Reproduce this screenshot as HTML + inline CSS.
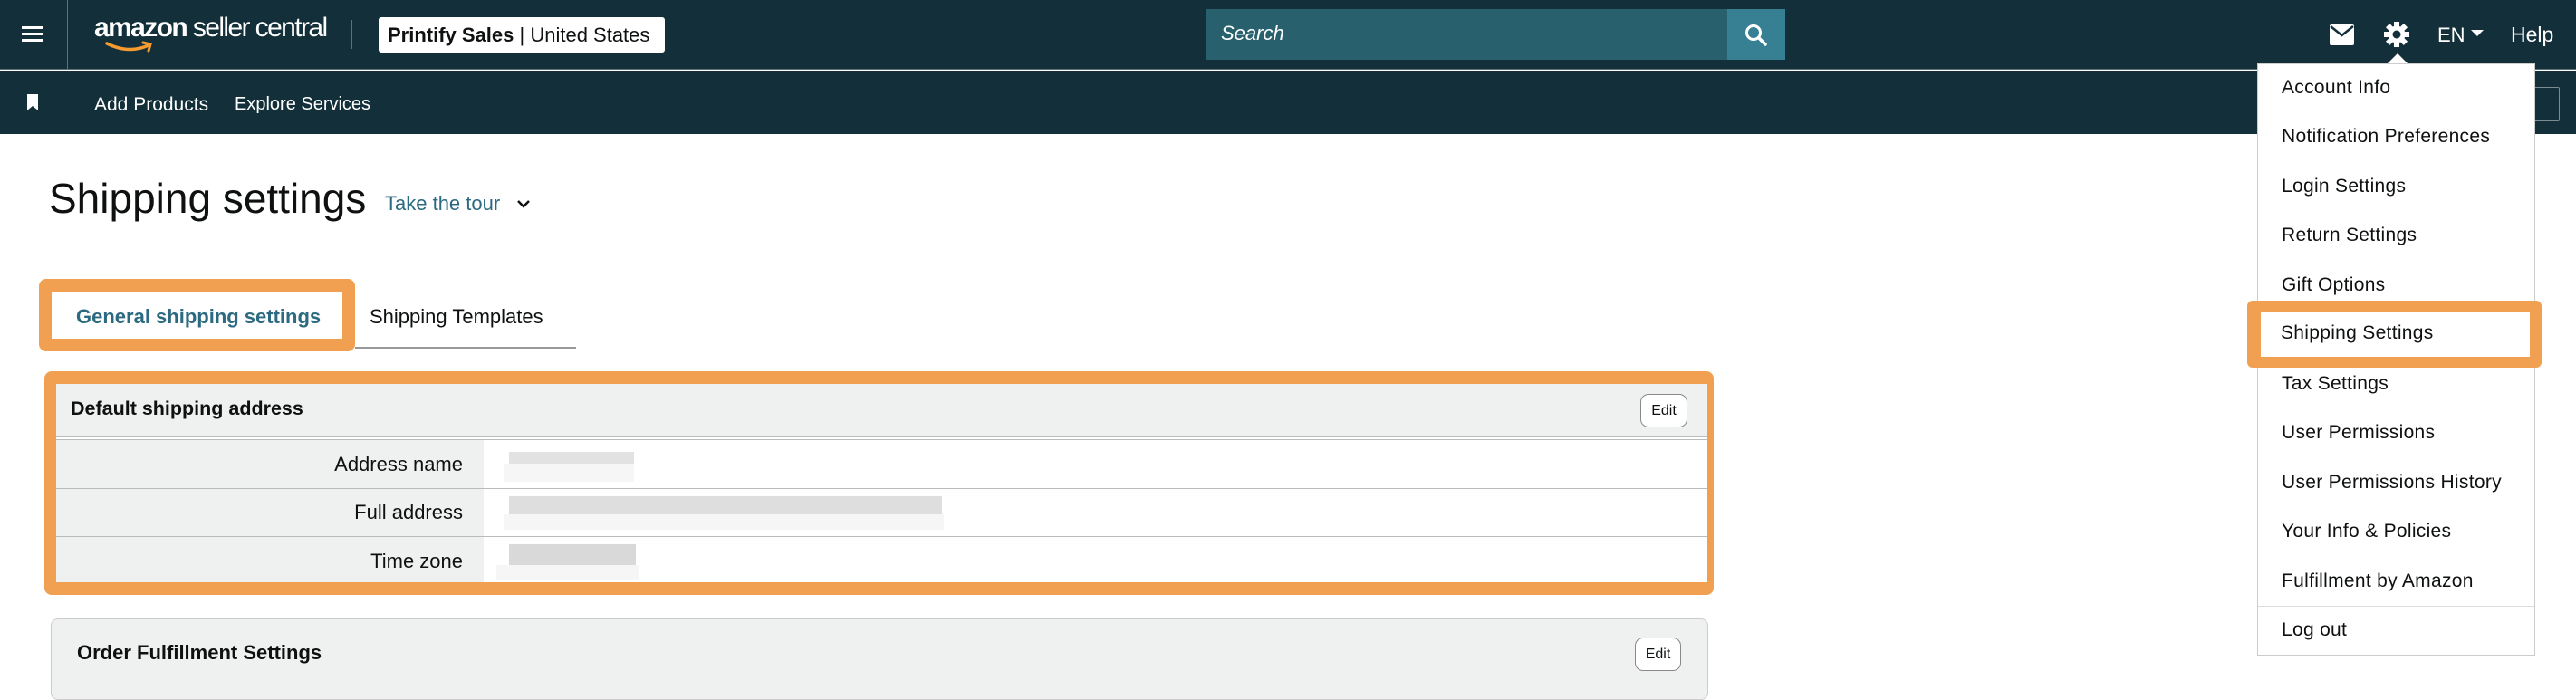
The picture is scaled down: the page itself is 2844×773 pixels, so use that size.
<!DOCTYPE html>
<html><head><meta charset="utf-8"><style>
*{box-sizing:border-box;margin:0;padding:0}
body{width:2844px;height:762px;overflow:hidden;background:#fff;font-family:"Liberation Sans",sans-serif;position:relative;color:#0f1111}
.a{position:absolute}
.nav1{left:0;top:0;width:2844px;height:77px;background:#132f3a;border-bottom:1px solid #5d7278}
.nav2{left:0;top:78px;width:2844px;height:70px;background:#132f3a}
.w{color:#fff}
.menu div{font-size:21px;color:#0f1111;position:absolute;left:26px;line-height:24px;letter-spacing:0.3px}
</style></head><body>
<div class="a nav1"></div>
<div class="a nav2"></div>
<div class="a" style="left:24px;top:29px;width:24px;height:3px;background:#fff"></div>
<div class="a" style="left:24px;top:36px;width:24px;height:3px;background:#fff"></div>
<div class="a" style="left:24px;top:43px;width:24px;height:3px;background:#fff"></div>
<div class="a" style="left:74px;top:0;width:1px;height:77px;background:#5d7278"></div>
<div class="a w" style="left:104px;top:14px;font-size:30px;letter-spacing:-1.6px;white-space:nowrap"><b style="font-weight:bold">amazon</b> seller central</div>
<svg class="a" style="left:116px;top:44px" width="56" height="16"><path d="M2 4 Q26 16 48 6" stroke="#f59b2f" stroke-width="3.5" fill="none" stroke-linecap="round"/><path d="M42 3 L50 5 L48 12" stroke="#f59b2f" stroke-width="3" fill="none" stroke-linecap="round"/></svg>
<div class="a" style="left:388px;top:22px;width:1px;height:32px;background:#5d7278"></div>
<div class="a" style="left:418px;top:19px;width:316px;height:39px;background:#fff;border-radius:3px;font-size:22px;line-height:39px;padding-left:10px;white-space:nowrap"><b>Printify Sales</b> | United States</div>
<div class="a" style="left:1331px;top:10px;width:576px;height:56px;background:#29606e"></div>
<div class="a w" style="left:1348px;top:24px;font-size:22px;font-style:italic">Search</div>
<div class="a" style="left:1907px;top:10px;width:64px;height:56px;background:#378094"></div>
<svg class="a" style="left:1926px;top:26px" width="26" height="26"><circle cx="10" cy="10" r="7.5" stroke="#fff" stroke-width="3" fill="none"/><path d="M15.5 15.5 L23 23" stroke="#fff" stroke-width="3.5" stroke-linecap="round"/></svg>
<svg class="a" style="left:2572px;top:27px" width="27" height="23"><rect x="0" y="0" width="27" height="23" rx="2" fill="#fff"/><path d="M1 2 L13.5 12 L26 2" stroke="#132f3a" stroke-width="2.5" fill="none"/></svg>
<svg class="a" style="left:2632px;top:24px" width="28" height="28" viewBox="0 0 28 28"><g fill="#fff" transform="translate(14 14)"><circle r="9.5"/><rect x="-3" y="-14" width="6" height="28"/><rect x="-3" y="-14" width="6" height="28" transform="rotate(45)"/><rect x="-3" y="-14" width="6" height="28" transform="rotate(90)"/><rect x="-3" y="-14" width="6" height="28" transform="rotate(135)"/></g><circle cx="14" cy="14" r="4.5" fill="#132f3a"/></svg>
<div class="a w" style="left:2691px;top:26px;font-size:22px">EN</div>
<svg class="a" style="left:2728px;top:33px" width="14" height="8"><path d="M0 0 L14 0 L7 7Z" fill="#fff"/></svg>
<div class="a w" style="left:2772px;top:25px;font-size:23px">Help</div>
<svg class="a" style="left:30px;top:104px" width="12" height="18"><path d="M0 0 H12 V18 L6 13 L0 18Z" fill="#fff"/></svg>
<div class="a w" style="left:104px;top:104px;font-size:21px">Add Products</div>
<div class="a w" style="left:259px;top:104px;font-size:20px">Explore Services</div>
<div class="a" style="left:2790px;top:96px;width:36px;height:38px;border:1px solid #7c8c90;border-radius:2px"></div>
<div class="a" style="left:54px;top:192px;font-size:46px;color:#0f1111">Shipping settings</div>
<div class="a" style="left:425px;top:212px;font-size:22px;color:#2b6a80">Take the tour</div>
<svg class="a" style="left:570px;top:220px" width="16" height="11"><path d="M2 2 L8 8 L14 2" stroke="#0f1111" stroke-width="2.5" fill="none"/></svg>
<div class="a" style="left:392px;top:383px;width:244px;height:2px;background:#999"></div>
<div class="a" style="left:43px;top:308px;width:349px;height:80px;background:#f0a050;border-radius:8px"></div>
<div class="a" style="left:57px;top:322px;width:321px;height:52px;background:#fff"></div>
<div class="a" style="left:84px;top:337px;font-size:22px;font-weight:bold;color:#2b6a80">General shipping settings</div>
<div class="a" style="left:408px;top:337px;font-size:22px">Shipping Templates</div>
<div class="a" style="left:49px;top:410px;width:1843px;height:247px;background:#f0a050;border-radius:8px"></div>
<div class="a" style="left:62px;top:424px;width:1823px;height:219px;background:#fff"></div>
<div class="a" style="left:62px;top:424px;width:1823px;height:59px;background:#eff0f0;border-bottom:1px solid #bbb"></div>
<div class="a" style="left:62px;top:485px;width:1823px;height:1px;background:#bbb"></div>
<div class="a" style="left:78px;top:439px;font-size:21.5px;font-weight:bold">Default shipping address</div>
<div class="a" style="left:1811px;top:435px;width:52px;height:37px;background:#fff;border:1px solid #888;border-radius:9px;font-size:16px;text-align:center;line-height:35px">Edit</div>
<div class="a" style="left:62px;top:486px;width:472px;height:157px;background:#eff0f0"></div>
<div class="a" style="left:62px;top:539px;width:1823px;height:1px;background:#bbb"></div>
<div class="a" style="left:62px;top:592px;width:1823px;height:1px;background:#bbb"></div>
<div class="a" style="left:62px;top:500px;width:449px;text-align:right;font-size:22px">Address name</div>
<div class="a" style="left:62px;top:553px;width:449px;text-align:right;font-size:22px">Full address</div>
<div class="a" style="left:62px;top:607px;width:449px;text-align:right;font-size:22px">Time zone</div>
<div class="a" style="left:562px;top:499px;width:138px;height:13px;background:#e2e2e2"></div>
<div class="a" style="left:556px;top:512px;width:144px;height:20px;background:#f6f6f6"></div>
<div class="a" style="left:562px;top:548px;width:478px;height:20px;background:#dedede"></div>
<div class="a" style="left:556px;top:568px;width:486px;height:17px;background:#f6f6f6"></div>
<div class="a" style="left:562px;top:601px;width:140px;height:23px;background:#d9d9d9"></div>
<div class="a" style="left:548px;top:624px;width:158px;height:16px;background:#f6f6f6"></div>
<div class="a" style="left:56px;top:683px;width:1830px;height:90px;background:#eff0f0;border:1px solid #ccc;border-radius:8px"></div>
<div class="a" style="left:85px;top:708px;font-size:22px;font-weight:bold">Order Fulfillment Settings</div>
<div class="a" style="left:1805px;top:704px;width:51px;height:37px;background:#fff;border:1px solid #888;border-radius:9px;font-size:16px;text-align:center;line-height:35px">Edit</div>
<svg class="a" style="left:2634px;top:58px" width="26" height="14"><path d="M0 14 L13 1 L26 14Z" fill="#fff"/></svg>
<div class="a menu" style="left:2492px;top:70px;width:307px;height:654px;background:#fff;border:1px solid #ccc">
<div style="top:14px">Account Info</div>
<div style="top:68px">Notification Preferences</div>
<div style="top:123px">Login Settings</div>
<div style="top:177px">Return Settings</div>
<div style="top:232px">Gift Options</div>
<div style="top:341px">Tax Settings</div>
<div style="top:395px">User Permissions</div>
<div style="top:450px">User Permissions History</div>
<div style="top:504px">Your Info &amp; Policies</div>
<div style="top:559px">Fulfillment by Amazon</div>
<div style="top:598px;left:0;width:305px;height:1px;background:#ddd"></div>
<div style="top:613px">Log out</div>
</div>
<div class="a" style="left:2481px;top:332px;width:325px;height:74px;background:#f0a050;border-radius:6px"></div>
<div class="a" style="left:2496px;top:345px;width:297px;height:49px;background:#fff"></div>
<div class="a" style="left:2518px;top:356px;font-size:21px;letter-spacing:0.3px">Shipping Settings</div>
</body></html>
